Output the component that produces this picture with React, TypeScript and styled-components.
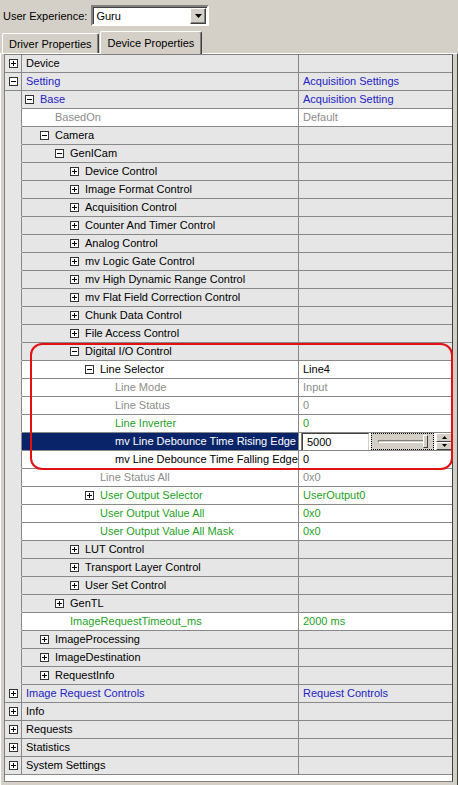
import React from 'react';
import styled, {createGlobalStyle} from 'styled-components';

const GlobalStyle = createGlobalStyle`
  html, body {
    margin: 0;
    padding: 0;
    background: #d4d0c8;
  }
  * {
    box-sizing: border-box;
  }
`;

const Window = styled.div`
  width: 458px;
  height: 785px;
  overflow: hidden;
  background: #d4d0c8;
  font-family: 'Liberation Sans', Arial, sans-serif;
  font-size: 11px;
  color: #000;
`;

const TopBar = styled.div`
  height: 31px;
  display: flex;
  align-items: center;
  gap: 4px;
  padding: 0 3px;
`;

const Combo = styled.div`
  width: 118px;
  height: 21px;
  display: flex;
  align-items: center;
  background: #fff;
  border: 2px solid;
  border-color: #808080 #fff #fff #808080;
  box-shadow: inset 1px 1px 0 #404040;
  padding: 0 1px 0 3px;
`;

const ComboText = styled.div`
  flex: 1;
  padding-top: 1px;
`;

const ComboButton = styled.div`
  width: 16px;
  height: 16px;
  display: flex;
  align-items: center;
  justify-content: center;
  background: #d4d0c8;
  border: 1px solid;
  border-color: #fff #404040 #404040 #fff;
  box-shadow: inset -1px -1px 0 #808080;
`;

const TabStrip = styled.div`
  height: 22px;
  display: flex;
  align-items: flex-end;
  padding-left: 2px;
`;

const Tab = styled.div<{$active?: boolean}>`
  height: ${p => (p.$active ? 23 : 20)}px;
  margin-bottom: ${p => (p.$active ? -1 : 0)}px;
  padding: 0 ${p => (p.$active ? 7 : 6)}px;
  margin-left: ${p => (p.$active ? 1 : 0)}px;
  display: flex;
  align-items: center;
  background: #d4d0c8;
  border-top: 1px solid #fff;
  border-left: 1px solid #fff;
  border-right: 1px solid #404040;
  border-radius: 2px 2px 0 0;
  box-shadow: inset -1px 0 0 #808080;
  position: relative;
  z-index: ${p => (p.$active ? 2 : 1)};
`;

const TabPage = styled.div`
  height: 732px;
  border-top: 1px solid #fff;
  border-left: 1px solid #fff;
  border-right: 1px solid #404040;
  padding: 0 4px 3px 3px;
`;

const GridFrame = styled.div`
  position: relative;
  height: 728px;
  background: #fff;
  border: 1px solid #808080;
  border-right-color: #404040;
`;

const Row = styled.div`
  display: flex;
  height: 18px;
  line-height: 17px;
  white-space: nowrap;
`;

const Gutter = styled.div<{$line: boolean}>`
  width: 17px;
  flex: none;
  display: flex;
  align-items: center;
  justify-content: center;
  padding-left: 1px;
  background: #e6e6e6;
  border-right: 1px solid #888;
  border-bottom: 1px solid ${p => (p.$line ? '#888' : '#e6e6e6')};
`;

const toneColor = {
  black: '#000',
  blue: '#2323c4',
  gray: '#8c8c8c',
  green: '#1f9f1f',
};

type Tone = keyof typeof toneColor;

const NameCell = styled.div<{$pad: number; $category: boolean; $selected: boolean; $tone: Tone}>`
  width: 277px;
  flex: none;
  display: flex;
  align-items: center;
  padding-left: ${p => p.$pad}px;
  overflow: hidden;
  background: ${p => (p.$selected ? '#0a246a' : p.$category ? '#e6e6e6' : '#fff')};
  color: ${p => (p.$selected ? '#fff' : toneColor[p.$tone])};
  border-right: 1px solid #888;
  border-bottom: 1px solid #888;
`;

const ValueCell = styled.div<{$category: boolean; $tone: Tone}>`
  flex: 1;
  display: flex;
  align-items: center;
  padding-left: 4px;
  overflow: hidden;
  background: ${p => (p.$category ? '#e6e6e6' : '#fff')};
  color: ${p => toneColor[p.$tone]};
  border-bottom: 1px solid #888;
`;

const ExpanderBox = styled.svg<{$gap: number}>`
  flex: none;
  width: 9px;
  height: 9px;
  margin-right: ${p => p.$gap}px;
`;

const EditorBox = styled.div`
  margin-left: -1px;
  width: 67px;
  height: 19px;
  margin-top: 1px;
  background: #fff;
  border: 1px solid;
  border-color: #404040 #d4d0c8 #d4d0c8 #404040;
  box-shadow: -1px -1px 0 #808080;
  padding-left: 4px;
  line-height: 16px;
  color: #000;
`;

const SliderBox = styled.div`
  width: 64px;
  height: 17px;
  margin-left: 2px;
  background: #d4d0c8;
  border: 1px dotted #000;
  position: relative;
`;

const SliderTrack = styled.div`
  position: absolute;
  left: 6px;
  right: 8px;
  top: 6px;
  height: 3px;
  border: 1px solid;
  border-color: #808080 #fff #fff #808080;
`;

const SliderThumb = styled.div`
  position: absolute;
  right: 5px;
  top: 1px;
  width: 5px;
  height: 13px;
  background: #d4d0c8;
  border: 1px solid;
  border-color: #fff #404040 #404040 #fff;
`;

const Spin = styled.div`
  width: 16px;
  height: 17px;
  margin-left: 2px;
  display: flex;
  flex-direction: column;
`;

const SpinButton = styled.div`
  flex: 1;
  display: flex;
  align-items: center;
  justify-content: center;
  background: #d4d0c8;
  border: 1px solid;
  border-color: #fff #404040 #404040 #fff;
`;

const Highlight = styled.div`
  position: absolute;
  left: 25px;
  top: 288px;
  width: 423px;
  height: 127px;
  border: 2px solid #e41010;
  border-radius: 12px;
  pointer-events: none;
`;

function Expander({open, gap}: {open: boolean; gap: number}) {
  return (
    <ExpanderBox $gap={gap} viewBox="0 0 9 9">
      <rect x="0.5" y="0.5" width="8" height="8" fill="#fff" stroke="#333" />
      <line x1="2" y1="4.5" x2="7" y2="4.5" stroke="#000" />
      {!open && <line x1="4.5" y1="2" x2="4.5" y2="7" stroke="#000" />}
    </ExpanderBox>
  );
}

type Item = {
  level: number;
  label: string;
  exp?: '+' | '-';
  value?: string;
  tone?: Tone;
  leaf?: boolean;
  selected?: boolean;
};

const items: Item[] = [
  {level: 0, label: 'Device', exp: '+'},
  {level: 0, label: 'Setting', exp: '-', value: 'Acquisition Settings', tone: 'blue'},
  {level: 1, label: 'Base', exp: '-', value: 'Acquisition Setting', tone: 'blue'},
  {level: 2, label: 'BasedOn', value: 'Default', tone: 'gray', leaf: true},
  {level: 2, label: 'Camera', exp: '-'},
  {level: 3, label: 'GenICam', exp: '-'},
  {level: 4, label: 'Device Control', exp: '+'},
  {level: 4, label: 'Image Format Control', exp: '+'},
  {level: 4, label: 'Acquisition Control', exp: '+'},
  {level: 4, label: 'Counter And Timer Control', exp: '+'},
  {level: 4, label: 'Analog Control', exp: '+'},
  {level: 4, label: 'mv Logic Gate Control', exp: '+'},
  {level: 4, label: 'mv High Dynamic Range Control', exp: '+'},
  {level: 4, label: 'mv Flat Field Correction Control', exp: '+'},
  {level: 4, label: 'Chunk Data Control', exp: '+'},
  {level: 4, label: 'File Access Control', exp: '+'},
  {level: 4, label: 'Digital I/O Control', exp: '-'},
  {level: 5, label: 'Line Selector', exp: '-', value: 'Line4', leaf: true},
  {level: 6, label: 'Line Mode', value: 'Input', tone: 'gray', leaf: true},
  {level: 6, label: 'Line Status', value: '0', tone: 'gray', leaf: true},
  {level: 6, label: 'Line Inverter', value: '0', tone: 'green', leaf: true},
  {level: 6, label: 'mv Line Debounce Time Rising Edge', value: '5000', leaf: true, selected: true},
  {level: 6, label: 'mv Line Debounce Time Falling Edge', value: '0', leaf: true},
  {level: 5, label: 'Line Status All', value: '0x0', tone: 'gray', leaf: true},
  {level: 5, label: 'User Output Selector', exp: '+', value: 'UserOutput0', tone: 'green', leaf: true},
  {level: 5, label: 'User Output Value All', value: '0x0', tone: 'green', leaf: true},
  {level: 5, label: 'User Output Value All Mask', value: '0x0', tone: 'green', leaf: true},
  {level: 4, label: 'LUT Control', exp: '+'},
  {level: 4, label: 'Transport Layer Control', exp: '+'},
  {level: 4, label: 'User Set Control', exp: '+'},
  {level: 3, label: 'GenTL', exp: '+'},
  {level: 3, label: 'ImageRequestTimeout_ms', value: '2000 ms', tone: 'green', leaf: true},
  {level: 2, label: 'ImageProcessing', exp: '+'},
  {level: 2, label: 'ImageDestination', exp: '+'},
  {level: 2, label: 'RequestInfo', exp: '+'},
  {level: 0, label: 'Image Request Controls', exp: '+', value: 'Request Controls', tone: 'blue'},
  {level: 0, label: 'Info', exp: '+'},
  {level: 0, label: 'Requests', exp: '+'},
  {level: 0, label: 'Statistics', exp: '+'},
  {level: 0, label: 'System Settings', exp: '+'},
];

function SpinArrow({up}: {up: boolean}) {
  return (
    <svg width="5" height="3" viewBox="0 0 5 3">
      <path d={up ? 'M2.5 0 L5 3 L0 3 Z' : 'M0 0 L5 0 L2.5 3 Z'} fill="#000" />
    </svg>
  );
}

function GridRow({item}: {item: Item}) {
  const tone = item.tone ?? 'black';
  const category = !item.leaf;
  const top = item.level === 0;
  const pad = top ? 4 : item.exp ? 15 * item.level - 12 : 15 * item.level + 3;
  return (
    <Row>
      <Gutter $line={top}>{top && item.exp && <Expander open={item.exp === '-'} gap={0} />}</Gutter>
      <NameCell $pad={pad} $category={category} $selected={!!item.selected} $tone={tone}>
        {!top && item.exp && <Expander open={item.exp === '-'} gap={6} />}
        {item.label}
      </NameCell>
      <ValueCell $category={category} $tone={tone}>
        {item.selected ? (
          <>
            <EditorBox>{item.value}</EditorBox>
            <SliderBox>
              <SliderTrack />
              <SliderThumb />
            </SliderBox>
            <Spin>
              <SpinButton>
                <SpinArrow up />
              </SpinButton>
              <SpinButton>
                <SpinArrow up={false} />
              </SpinButton>
            </Spin>
          </>
        ) : (
          item.value
        )}
      </ValueCell>
    </Row>
  );
}

export default function App() {
  return (
    <Window>
      <GlobalStyle />
      <TopBar>
        <span>User Experience:</span>
        <Combo>
          <ComboText>Guru</ComboText>
          <ComboButton>
            <svg width="7" height="4" viewBox="0 0 7 4">
              <path d="M0 0 L7 0 L3.5 4 Z" fill="#000" />
            </svg>
          </ComboButton>
        </Combo>
      </TopBar>
      <TabStrip>
        <Tab>Driver Properties</Tab>
        <Tab $active>Device Properties</Tab>
      </TabStrip>
      <TabPage>
        <GridFrame>
          {items.map((item, i) => (
            <GridRow key={i} item={item} />
          ))}
          <Highlight />
        </GridFrame>
      </TabPage>
    </Window>
  );
}
